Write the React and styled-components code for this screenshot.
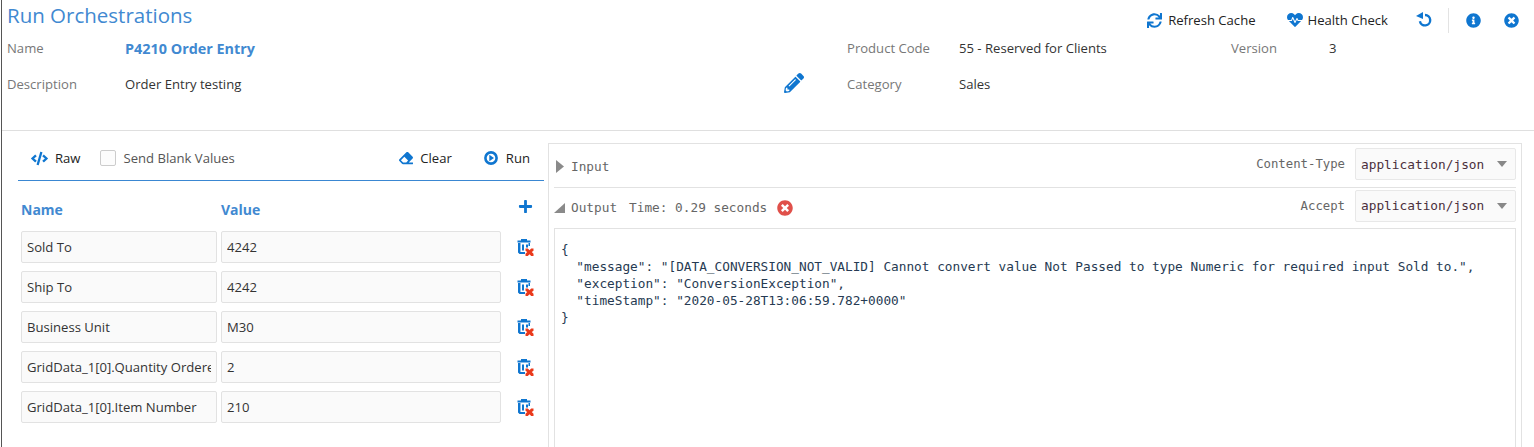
import React from 'react'
import styled, {createGlobalStyle} from 'styled-components'
import {FaSync, FaHeartbeat, FaInfoCircle, FaTimesCircle, FaCode, FaEraser, FaPlus, FaPencilAlt} from 'react-icons/fa'

const blue = '#0f76d0'
const heading = '#4189d1'

const Global = createGlobalStyle`
html, body { margin: 0; padding: 0; background: #fff; }
body { font-family: "Open Sans", "Noto Sans", sans-serif; font-size: 13.1px; color: #333; overflow: hidden; }
* { box-sizing: border-box; }
`

const Page = styled.div`
height: 447px;
margin-left: 1px;
border-left: 1px solid #555;
overflow: hidden;
`

const Header = styled.header`
height: 131px;
border-bottom: 1px solid #dfdfdf;
padding: 0 15px 0 5px;
`

const TitleBar = styled.div`
display: flex;
justify-content: space-between;
align-items: flex-start;
height: 40px;
`

const Title = styled.h1`
margin: 0;
font-size: 20.5px;
font-weight: 400;
line-height: 31px;
color: ${heading};
`

const Actions = styled.div`
display: flex;
align-items: center;
height: 32px;
margin-top: 4px;
`

const Action = styled.button`
display: flex;
align-items: center;
gap: ${p => p.$space || 6}px;
border: 0;
padding: 0;
margin-left: ${p => p.$gap || 0}px;
background: none;
font: inherit;
color: #222;
svg { color: ${blue}; font-size: ${p => p.$icon || 15}px; }
`

const Divider = styled.span`
width: 1px;
height: 25px;
margin-left: 16px;
background: #e3e3e3;
`

const Meta = styled.div`
display: grid;
grid-template-columns: 118px 722px 112px 272px 98px 1fr;
grid-auto-rows: 36px;
align-items: center;
margin-top: -10px;
`

const Label = styled.span`
color: #777;
`

const Value = styled.span`
color: ${p => p.$strong ? heading : '#333'};
font-weight: ${p => p.$strong ? 700 : 400};
font-size: ${p => p.$strong ? 14.4 : 13.1}px;
`

const DescriptionCell = styled.span`
display: flex;
justify-content: space-between;
align-items: center;
`

const EditCell = styled.span`
display: flex;
padding-right: 43px;
color: ${blue};
font-size: 20px;
margin-top: -3px;
`

const Main = styled.main`
display: flex;
gap: 4px;
padding: 12px 0 0 16px;
`

const Left = styled.section`
width: 526px;
flex: none;
`

const Toolbar = styled.div`
display: flex;
align-items: center;
height: 38px;
border-bottom: 1px solid #3a87d2;
padding: 0 14px 7px 13px;
`

const Check = styled.span`
width: 16px;
height: 16px;
margin: 0 8px 0 19px;
border: 1px solid #ccc;
border-radius: 2px;
background: #fcfcfc;
`

const CheckLabel = styled.span`
flex: 1;
color: #555;
`

const ColumnHead = styled.div`
display: grid;
grid-template-columns: 200px 280px 1fr;
align-items: center;
height: 50px;
padding: 6px 0 0 3px;
font-size: 14px;
font-weight: 700;
color: ${heading};
svg { justify-self: end; margin-right: 11px; margin-top: -6px; color: ${blue}; font-size: 15px; }
`

const FieldRow = styled.div`
display: grid;
grid-template-columns: 196px 280px 1fr;
column-gap: 4px;
align-items: center;
height: 40px;
padding: 0 0 8px 3px;
`

const Field = styled.input`
width: 100%;
height: 32px;
padding: 0 5px;
border: 1px solid #e2e2e2;
border-radius: 2px;
background: #fafafa;
font: inherit;
color: #333;
outline: none;
`

const TrashWrap = styled.span`
display: flex;
padding-left: 12px;
`

const Right = styled.section`
width: 974px;
flex: none;
height: 320px;
border: 1px solid #e2e2e2;
border-bottom: 0;
padding: 0 5px 0 5px;
font-family: "DejaVu Sans Mono", "Liberation Mono", monospace;
font-size: 12.3px;
color: #666;
`

const ExchangeRow = styled.div`
display: flex;
align-items: center;
height: ${p => p.$h}px;
padding-bottom: ${p => p.$pb}px;
border-bottom: ${p => p.$line ? '1px solid #e2e2e2' : 0};
`

const Arrow = styled.svg`
width: 11px;
height: 13px;
margin: 4px 6px 0 0;
fill: #8a8a8a;
`

const Grow = styled.span`
flex: 1;
display: flex;
align-items: center;
margin-top: 4px;
font-size: 12.75px;
`

const Time = styled.span`
margin-left: 12px;
`

const ErrorIcon = styled(FaTimesCircle)`
margin-left: 10px;
color: #e0504a;
font-size: 16px;
`

const HeaderName = styled.span`
margin-right: 10px;
`

const Select = styled.div`
display: flex;
align-items: center;
justify-content: space-between;
width: 161px;
height: 32px;
padding: 0 8px 0 5px;
border: 1px solid #e8e8e8;
border-radius: 2px;
background: #fafafa;
color: #4a2f3c;
font-size: 12.8px;
&::after {
  content: '';
  border-left: 5px solid transparent;
  border-right: 5px solid transparent;
  border-top: 6px solid #888;
}
`

const Output = styled.pre`
margin: 0;
height: 240px;
padding: 12px 6px;
border: 1px solid #e2e2e2;
font: inherit;
font-size: 12.75px;
line-height: 17px;
color: #263a52;
`

// the pack's undo arrow is thinner than the one in the app bar
const UndoIcon = () => (
  <svg width="16" height="16" viewBox="0 0 16 16">
    <path fill="none" stroke={blue} strokeWidth="2.4" d="M9 3a5.2 5.2 0 1 1-5.1 6.2" />
    <path fill={blue} d="M0 4l7-4v7z" />
  </svg>
)

// trash can with the small red cross, no matching icon in the packs
const TrashIcon = () => (
  <svg width="18" height="17" viewBox="0 0 18 17">
    <path fill={blue} d="M4 0h6v1.5h3.5v2H.5v-2H4z" />
    <path fill={blue} d="M1 4h2v9h5v2H2.5L1 13.5z" />
    <path fill="#8fc0ea" d="M3 4h1v9H3z" />
    <path fill={blue} d="M5 5.5h2v6H5zM9 5.5h2v3H9zM11.5 4h1.5v3h-1.5z" />
    <path fill="#ea3a1c" d="M8.5 9.5h2.3l1.7 1.7 1.7-1.7h2.3v2.2L14.8 13l1.7 1.8V17h-2.3l-1.7-1.7-1.7 1.7H8.5v-2.2l1.7-1.8-1.7-1.3z" />
  </svg>
)

const PlayIcon = () => (
  <svg width="14" height="14" viewBox="0 0 14 14">
    <circle cx="7" cy="7" r="5.6" fill="none" stroke={blue} strokeWidth="2.6" />
    <path fill={blue} d="M5.3 3.8 10 7l-4.7 3.2z" />
  </svg>
)

const fields = [
  ['Sold To', '4242'],
  ['Ship To', '4242'],
  ['Business Unit', 'M30'],
  ['GridData_1[0].Quantity Ordered', '2'],
  ['GridData_1[0].Item Number', '210'],
]

const json = `{
  "message": "[DATA_CONVERSION_NOT_VALID] Cannot convert value Not Passed to type Numeric for required input Sold to.",
  "exception": "ConversionException",
  "timeStamp": "2020-05-28T13:06:59.782+0000"
}`

const App = () => (
  <Page>
    <Global />
    <Header>
      <TitleBar>
        <Title>Run Orchestrations</Title>
        <Actions>
          <Action><FaSync />Refresh Cache</Action>
          <Action $gap={31} $icon={16} $space={5}><FaHeartbeat />Health Check</Action>
          <Action $gap={28}><UndoIcon /></Action>
          <Divider />
          <Action $gap={17}><FaInfoCircle /></Action>
          <Action $gap={23}><FaTimesCircle /></Action>
        </Actions>
      </TitleBar>
      <Meta>
        <Label>Name</Label>
        <Value $strong>P4210 Order Entry</Value>
        <Label>Product Code</Label>
        <Value>55 - Reserved for Clients</Value>
        <Label>Version</Label>
        <Value>3</Value>
        <Label>Description</Label>
        <DescriptionCell>
          <Value>Order Entry testing</Value>
          <EditCell><FaPencilAlt /></EditCell>
        </DescriptionCell>
        <Label>Category</Label>
        <Value>Sales</Value>
      </Meta>
    </Header>
    <Main>
      <Left>
        <Toolbar>
          <Action $icon={17} $space={7}><FaCode />Raw</Action>
          <Check />
          <CheckLabel>Send Blank Values</CheckLabel>
          <Action $icon={14} $space={7}><FaEraser />Clear</Action>
          <Action $gap={32} $space={8}><PlayIcon />Run</Action>
        </Toolbar>
        <ColumnHead>
          <span>Name</span>
          <span>Value</span>
          <FaPlus />
        </ColumnHead>
        {fields.map(([name, value]) => (
          <FieldRow key={name}>
            <Field readOnly value={name} />
            <Field readOnly value={value} />
            <TrashWrap><TrashIcon /></TrashWrap>
          </FieldRow>
        ))}
      </Left>
      <Right>
        <ExchangeRow $h={44} $pb={3} $line>
          <Arrow viewBox="0 0 11 13"><path d="M2 0l8 6.5L2 13z" /></Arrow>
          <Grow>Input</Grow>
          <HeaderName>Content-Type</HeaderName>
          <Select>application/json</Select>
        </ExchangeRow>
        <ExchangeRow $h={40} $pb={5}>
          <Arrow viewBox="0 0 11 13"><path d="M11 2v10H0z" /></Arrow>
          <Grow>
            Output
            <Time>Time: 0.29 seconds</Time>
            <ErrorIcon />
          </Grow>
          <HeaderName>Accept</HeaderName>
          <Select>application/json</Select>
        </ExchangeRow>
        <Output>{json}</Output>
      </Right>
    </Main>
  </Page>
)

export default App
